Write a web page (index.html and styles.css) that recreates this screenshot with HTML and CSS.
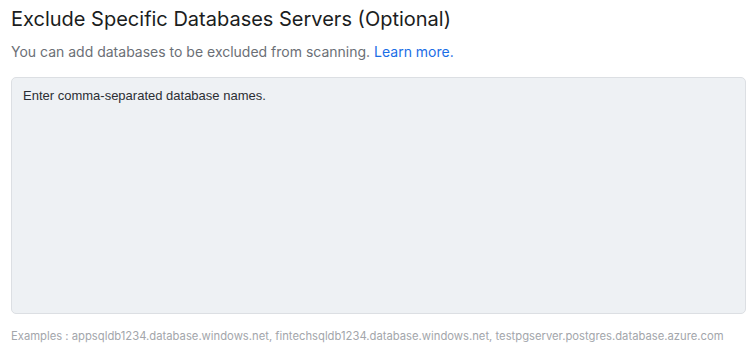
FILE: index.html
```html
<!DOCTYPE HTML>
<html>
<head>
  <meta charset="utf-8">
  <title>Exclude databases</title>
  <link rel="stylesheet" href="styles.css">
</head>
<body>
<section class="exclude">
  <h2 class="exclude-title">Exclude Specific Databases Servers (Optional)</h2>
  <p class="exclude-desc">You can add databases to be excluded from scanning. <a href="#">Learn more.</a></p>
  <textarea class="exclude-input" placeholder="Enter comma-separated database names."></textarea>
  <p class="exclude-hint">Examples : appsqldb1234.database.windows.net, fintechsqldb1234.database.windows.net, testpgserver.postgres.database.azure.com</p>
</section>
</body>
</html>
```

FILE: styles.css
```css
/*reset*/
body{margin:0;padding:0;background:#fff;}
a{color:#1a6ee6;text-decoration:none;}

/*exclude block*/
.exclude{
	display:flex;
	flex-direction:column;
	padding:7px 9px 0 11px;
	font-family:Inter,"Noto Sans",sans-serif;
}
.exclude-title{
	margin:0;
	font-size:20px;
	line-height:24px;
	font-weight:400;
	color:#1b1d21;
}
.exclude-desc{
	margin:11px 0 0;
	font-size:14px;
	line-height:20px;
	color:#6b6f76;
}
.exclude-input{
	box-sizing:border-box;
	width:100%;
	height:237px;
	margin:15px 0 0;
	padding:10px 11px;
	border:1px solid #dcdfe3;
	border-radius:5px;
	background:#eef1f4;
	font:13px "Liberation Sans",Arial,sans-serif;
	color:#222;
	resize:none;
	outline:none;
}
.exclude-input::placeholder{
	color:#2b2e33;
}
.exclude-hint{
	margin:14px 0 0;
	font-size:11.25px;
	line-height:16px;
	color:#a3a6ab;
}
```
